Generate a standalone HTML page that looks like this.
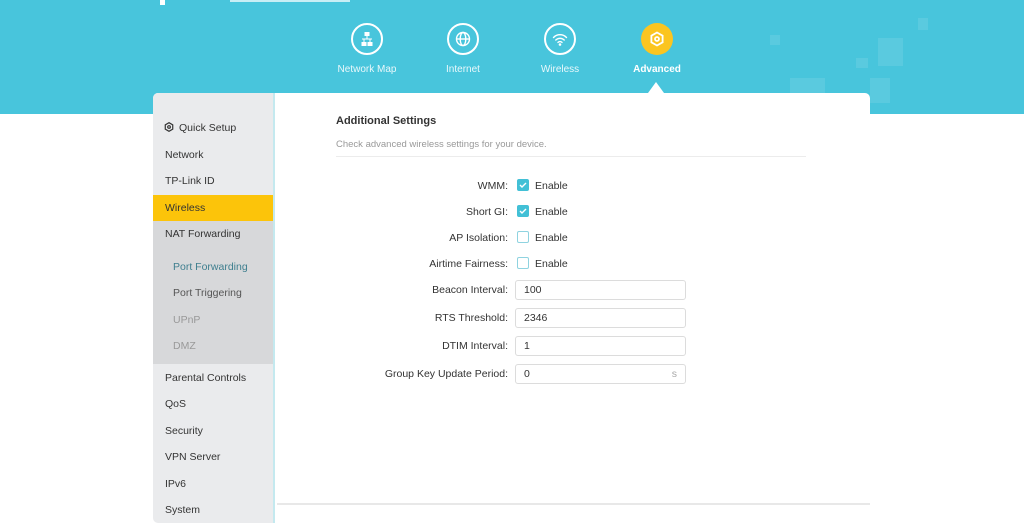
<!DOCTYPE html>
<html><head><meta charset="utf-8"><style>
*{margin:0;padding:0;box-sizing:border-box}
body{width:1024px;height:512px;overflow:hidden;background:#fff;font-family:"Liberation Sans",Arial,sans-serif;position:relative}
.hdr{position:absolute;left:0;top:0;width:1024px;height:114px;background:#48c5dc}
.sq{position:absolute;background:rgba(255,255,255,.10)}
.nav{position:absolute;top:23px;width:80px;text-align:center;color:#e9f8fb;font-size:10px}
.nav .c{width:32px;height:32px;border:2px solid #fff;border-radius:50%;margin:0 auto 9px;display:flex;align-items:center;justify-content:center}
.nav.a{color:#fff;font-weight:bold}
.nav.a .c{background:#fbc520;border:none}
.card{position:absolute;left:153px;top:93px;width:717px;height:430px;background:#fff;border-radius:5px;overflow:hidden}
.side{position:absolute;left:0;top:0;width:122px;height:430px;background:#eaebed;border-right:2px solid #c4e9ef}
.side div{height:26.5px;line-height:26.5px;padding-left:12px;font-size:10.5px;color:#333}
.side .y{background:#fcc40a}
.side .g{background:#d7d8da}
.side .sub{padding-left:20px;color:#555}
.arrow{position:absolute;left:648px;top:82px;width:0;height:0;border-left:8px solid transparent;border-right:8px solid transparent;border-bottom:11px solid #fff}
.lbl{position:absolute;right:516px;font-size:10.5px;color:#333;text-align:right;white-space:nowrap}
.cb{position:absolute;left:517px;width:12px;height:12px;border-radius:2px;border:1px solid #8fd3e0;background:#fff}
.cb.on{background:#42c0d6;border-color:#42c0d6}
.en{position:absolute;left:535px;font-size:10.5px;color:#333}
.inp{position:absolute;left:515px;width:171px;height:20px;border:1px solid #dcdcdc;border-radius:3px;font-size:10.5px;color:#333;padding-left:8px;line-height:18px}
</style></head><body>
<div class="hdr">
<div style="position:absolute;left:160px;top:0;width:5px;height:5px;background:#fff"></div>
<div style="position:absolute;left:230px;top:0;width:120px;height:2px;background:rgba(255,255,255,.7)"></div>
<div class="sq" style="left:878px;top:38px;width:25px;height:28px"></div>
<div class="sq" style="left:856px;top:58px;width:12px;height:10px"></div>
<div class="sq" style="left:790px;top:78px;width:35px;height:16px"></div>
<div class="sq" style="left:870px;top:78px;width:20px;height:25px"></div>
<div class="sq" style="left:770px;top:35px;width:10px;height:10px"></div>
<div class="sq" style="left:918px;top:18px;width:10px;height:12px"></div>
<div class="nav" style="left:327px"><div class="c"><svg width="18" height="18" viewBox="0 0 18 18" fill="#fff"><rect x="6.5" y="2" width="5" height="4"/><rect x="8.5" y="6" width="1" height="3"/><rect x="4" y="8.5" width="10" height="1"/><rect x="3.5" y="12" width="5" height="4"/><rect x="9.5" y="12" width="5" height="4"/><rect x="5.5" y="9" width="1" height="3"/><rect x="11.5" y="9" width="1" height="3"/></svg></div>Network Map</div>
<div class="nav" style="left:423px"><div class="c"><svg width="18" height="18" viewBox="0 0 18 18" fill="none" stroke="#fff" stroke-width="1.4"><circle cx="9" cy="9" r="6.5"/><ellipse cx="9" cy="9" rx="2.8" ry="6.5"/><line x1="2.5" y1="9" x2="15.5" y2="9"/></svg></div>Internet</div>
<div class="nav" style="left:520px"><div class="c"><svg width="18" height="18" viewBox="0 0 18 18" fill="none" stroke="#fff" stroke-width="1.4" stroke-linecap="round"><path d="M2.5 7.5a9 9 0 0 1 13 0"/><path d="M4.8 10a6 6 0 0 1 8.4 0"/><path d="M7 12.4a3 3 0 0 1 4 0"/><circle cx="9" cy="14.5" r=".6" fill="#fff"/></svg></div>Wireless</div>
<div class="nav a" style="left:617px"><div class="c" style="width:32px;height:32px"><svg width="18" height="18" viewBox="0 0 18 18" fill="none" stroke="#fff" stroke-width="1.8"><path d="M9 2.5l5.6 3.2v6.6L9 15.5l-5.6-3.2V5.7z"/><circle cx="9" cy="9" r="2"/></svg></div>Advanced</div>
<div class="arrow"></div>
</div>
<div class="card">
<div class="side">
<div style="height:22px"></div>
<div style="padding-left:10px"><svg width="12" height="12" viewBox="0 0 18 18" fill="none" stroke="#333" stroke-width="1.8" style="vertical-align:-2px;margin-right:4px"><path d="M9 2.5l5.6 3.2v6.6L9 15.5l-5.6-3.2V5.7z"/><circle cx="9" cy="9" r="2"/></svg>Quick Setup</div>
<div>Network</div><div>TP-Link ID</div>
<div class="y">Wireless</div>
<div class="g">NAT Forwarding</div>
<div class="g" style="height:116px;padding:0">
<div class="sub" style="height:6px"></div>
<div class="sub" style="color:#3f7f8f">Port Forwarding</div>
<div class="sub">Port Triggering</div>
<div class="sub" style="color:#999">UPnP</div>
<div class="sub" style="color:#999">DMZ</div>
</div>
<div style="margin-top:1px">Parental Controls</div><div>QoS</div><div>Security</div><div>VPN Server</div><div>IPv6</div><div>System</div>
</div>
<div style="position:absolute;left:124px;top:410px;width:593px;height:2px;background:#e8e8e8"></div>
</div>
<div style="position:absolute;left:336px;top:115px;font-size:11px;font-weight:bold;color:#333">Additional Settings</div>
<div style="position:absolute;left:336px;top:139px;font-size:9.5px;color:#999">Check advanced wireless settings for your device.</div>
<div style="position:absolute;left:336px;top:156px;width:470px;height:1px;background:#ececec"></div>

<div class="lbl" style="top:180px">WMM:</div><div class="cb on" style="top:179px"></div><div class="en" style="top:180px">Enable</div>
<div class="lbl" style="top:206px">Short GI:</div><div class="cb on" style="top:205px"></div><div class="en" style="top:206px">Enable</div>
<div class="lbl" style="top:232px">AP Isolation:</div><div class="cb" style="top:231px"></div><div class="en" style="top:232px">Enable</div>
<div class="lbl" style="top:258px">Airtime Fairness:</div><div class="cb" style="top:257px"></div><div class="en" style="top:258px">Enable</div>
<div class="lbl" style="top:284px">Beacon Interval:</div><div class="inp" style="top:280px">100</div>
<div class="lbl" style="top:312px">RTS Threshold:</div><div class="inp" style="top:308px">2346</div>
<div class="lbl" style="top:340px">DTIM Interval:</div><div class="inp" style="top:336px">1</div>
<div class="lbl" style="top:368px">Group Key Update Period:</div><div class="inp" style="top:364px">0<span style="position:absolute;right:8px;color:#aaa">s</span></div>
<svg style="position:absolute;left:519px;top:182px" width="8" height="6" viewBox="0 0 8 6"><path d="M1 3l2 2 4-4" stroke="#fff" stroke-width="1.4" fill="none"/></svg>
<svg style="position:absolute;left:519px;top:208px" width="8" height="6" viewBox="0 0 8 6"><path d="M1 3l2 2 4-4" stroke="#fff" stroke-width="1.4" fill="none"/></svg>
</body></html>
